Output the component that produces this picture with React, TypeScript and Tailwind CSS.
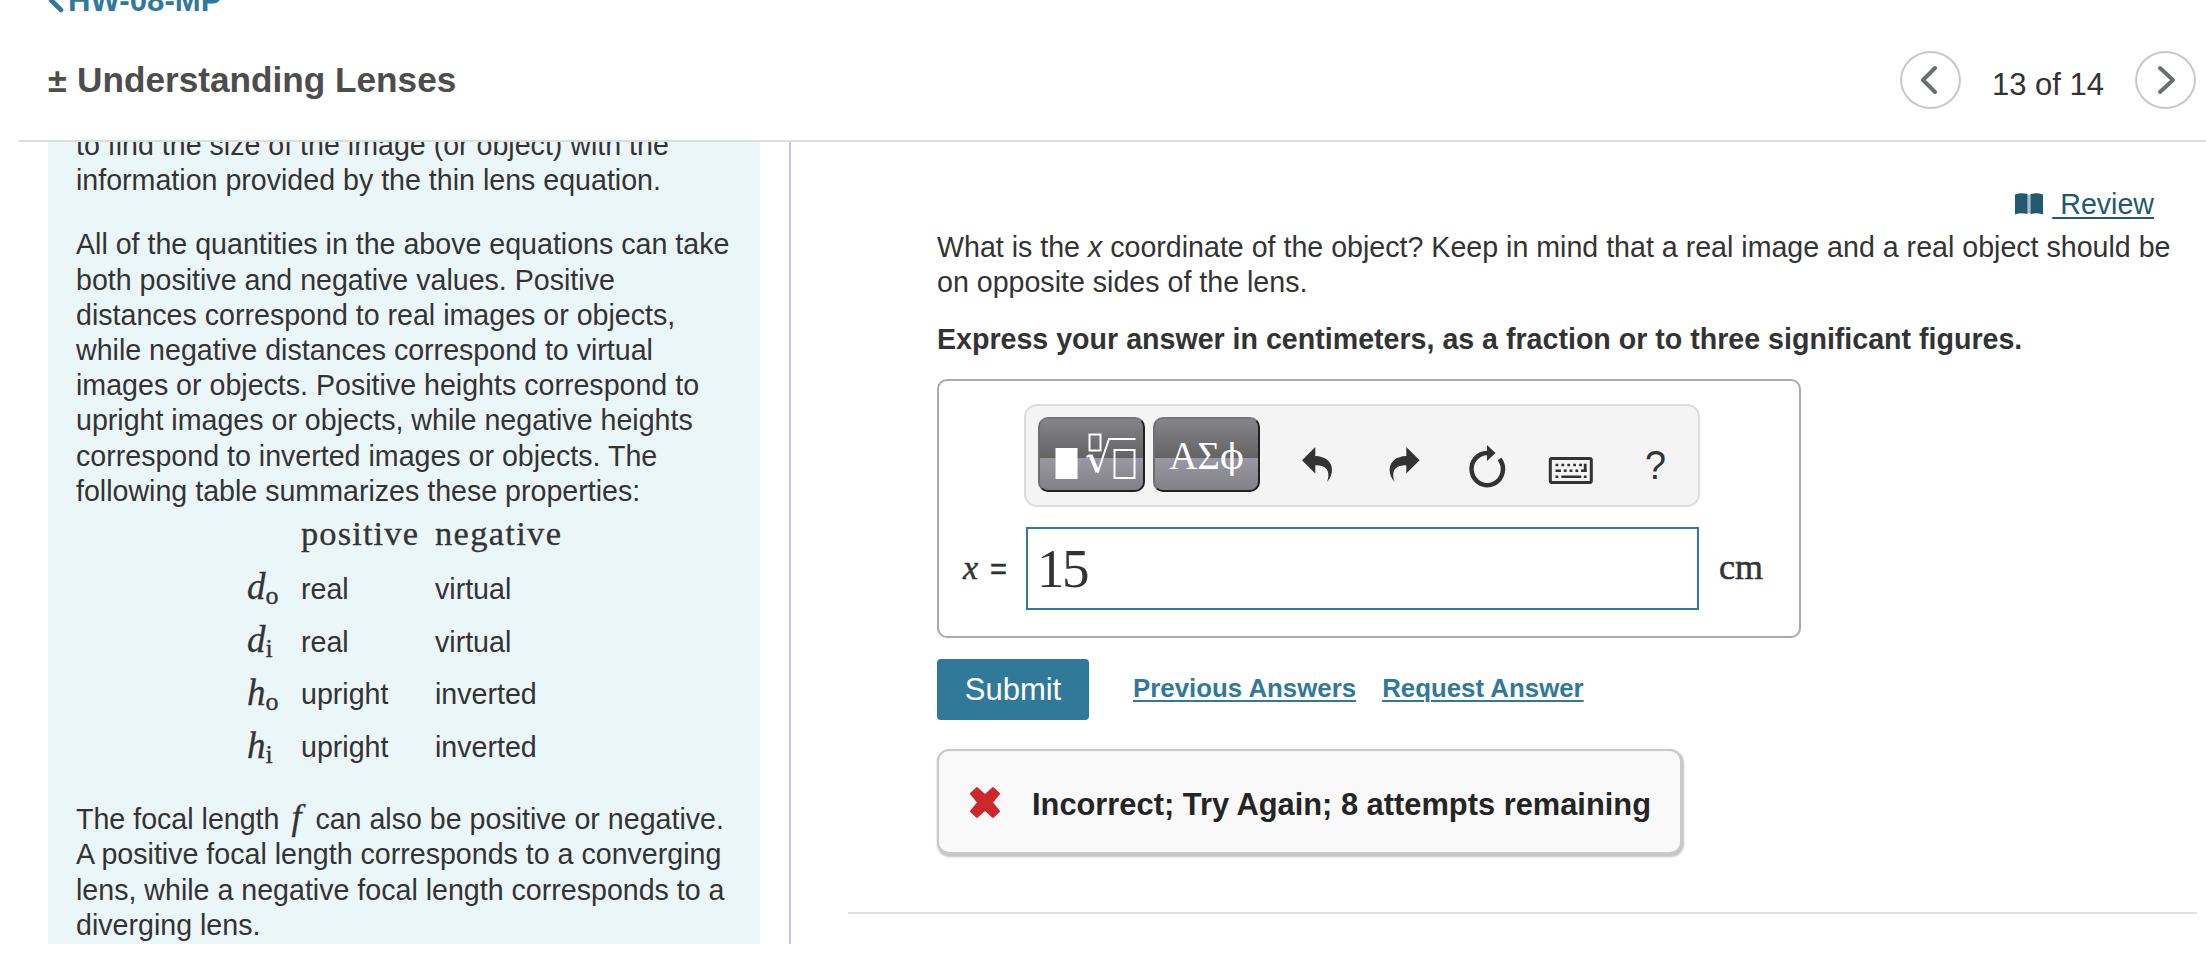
import type { ReactNode } from "react";

const SERIF = "font-['Liberation_Serif',serif]";

const PROPERTIES = [
  { symbol: "d", sub: "o", positive: "real", negative: "virtual" },
  { symbol: "d", sub: "i", positive: "real", negative: "virtual" },
  { symbol: "h", sub: "o", positive: "upright", negative: "inverted" },
  { symbol: "h", sub: "i", positive: "upright", negative: "inverted" },
];

function NavButton({ label, points }: { label: string; points: string }) {
  return (
    <button
      aria-label={label}
      className="w-[61px] h-[58px] rounded-[50%] border-2 border-[#c8c8c8] flex items-center justify-center"
    >
      <svg width="20" height="30" viewBox="0 0 20 30" fill="none" stroke="#6a7070" strokeWidth="4" strokeLinecap="round" strokeLinejoin="round">
        <polyline points={points} />
      </svg>
    </button>
  );
}

function PaletteButton({ children }: { children: ReactNode }) {
  return (
    <button className="w-[107px] h-[75px] rounded-[10px] border-2 border-t-[#77767a] border-l-[#6f6f72] border-r-[#202022] border-b-[#202022] bg-[linear-gradient(to_bottom,#858489_0%,#636363_55%,#9997a2_55%,#828186_100%)] overflow-hidden">
      {children}
    </button>
  );
}

function Header() {
  return (
    <header className="h-[142px] ml-[19px] border-b-2 border-[#ddd] flex justify-between overflow-hidden">
      <div className="ml-[29px]">
        <div className="h-[62px] flex items-start text-[#317999]">
          <svg className="mt-[-12px]" width="18" height="26" viewBox="0 0 18 26" fill="none" stroke="currentColor" strokeWidth="4.6" strokeLinecap="round" strokeLinejoin="round">
            <polyline points="13,2 3,12 13,22" />
          </svg>
          <span className="mt-[-17px] ml-[2px] text-[31.2px] leading-[36px] font-bold">HW-08-MP</span>
        </div>
        <h1 className="text-[35.2px] leading-[36px] font-bold text-[#4d4d4d] whitespace-nowrap">
          <span className="inline-block w-[29px] text-[34px]">±</span>Understanding Lenses
        </h1>
      </div>
      <nav className="flex items-start mt-[51px] mr-[10px]">
        <NavButton label="Previous item" points="14,3 2,15 14,27" />
        <span className="w-[174px] mt-[16px] text-center text-[31px] leading-[36px]">13 of 14</span>
        <NavButton label="Next item" points="4,3 17,15 4,27" />
      </nav>
    </header>
  );
}

function IntroPanel() {
  return (
    <aside className="w-[712px] h-[802px] ml-[48px] pl-[28px] bg-[#eaf6f8] overflow-hidden text-[28.6px] leading-[35.2px] whitespace-nowrap">
      <p className="mt-[-14px]">
        to find the size of the image (or object) with the
        <br />
        information provided by the thin lens equation.
      </p>
      <p className="mt-[29px]">
        All of the quantities in the above equations can take
        <br />
        both positive and negative values. Positive
        <br />
        distances correspond to real images or objects,
        <br />
        while negative distances correspond to virtual
        <br />
        images or objects. Positive heights correspond to
        <br />
        upright images or objects, while negative heights
        <br />
        correspond to inverted images or objects. The
        <br />
        following table summarizes these properties:
      </p>
      <div className="ml-[171px] mt-[4px] grid grid-cols-[54px_134px_200px]">
        <span />
        <span className={`${SERIF} text-[34.5px] tracking-[1.1px] leading-[40px] [-webkit-text-stroke:0.3px]`}>positive</span>
        <span className={`${SERIF} text-[34.5px] tracking-[1.3px] leading-[40px] [-webkit-text-stroke:0.3px]`}>negative</span>
      </div>
      <div className="ml-[171px] mt-[10px]">
        {PROPERTIES.map((row) => (
          <div key={row.symbol + row.sub} className="h-[52.8px] grid grid-cols-[54px_134px_200px] items-center">
            <span className={`${SERIF} text-[37px] leading-[40px] [-webkit-text-stroke:0.3px]`}>
              <i>{row.symbol}</i>
              <span className="relative top-[5px] text-[26px]">{row.sub}</span>
            </span>
            <span>{row.positive}</span>
            <span>{row.negative}</span>
          </div>
        ))}
      </div>
      <p className="mt-[28px]">
        The focal length <i className={`${SERIF} text-[36px] leading-[20px] ml-[4px] mr-[6px] [-webkit-text-stroke:0.3px]`}>f</i> can also be positive or negative.
        <br />
        A positive focal length corresponds to a converging
        <br />
        lens, while a negative focal length corresponds to a
        <br />
        diverging lens.
      </p>
    </aside>
  );
}

function RootGlyph() {
  return (
    <svg width="103" height="71" viewBox="1040.500 419 103 71" fill="none" stroke="#fff" strokeWidth="2">
      <rect x="1056" y="448" width="22" height="31" fill="#fff" stroke="none" />
      <rect x="1090" y="434.500" width="11" height="16" />
      <polyline points="1087,457 1091,455" />
      <polyline points="1091,455 1098,472" strokeWidth="4" />
      <polyline points="1098,473 1109.500,439 1136,439" />
      <rect x="1115" y="450" width="20" height="28" />
    </svg>
  );
}

function Toolbar() {
  return (
    <div className="w-[676px] h-[103px] rounded-[13px] border-2 border-[#dcdcdc] bg-[#f4f4f4] flex items-start pl-3 pt-[11px]">
      <PaletteButton>
        <RootGlyph />
      </PaletteButton>
      <div className="w-2" />
      <PaletteButton>
        <span className={`${SERIF} block text-[39px] leading-[73px] text-white`}>
          ΑΣ<span className="font-['DejaVu_Serif',serif] text-[35px] leading-[20px]">ϕ</span>
        </span>
      </PaletteButton>
      <svg width="420" height="75" viewBox="1260 417 420 75" fill="none">
        <path d="M1302 460.300L1315.300 447v9c10 .4 16.700 5.500 16.700 14 0 4.500-2 8.500-5 12 .6-2 1.400-4 1.400-7 0-6-4-10-13.100-9.700v8.300z" fill="#333" />
        <path d="M1419.600 460.300L1406.300 447v9c-10 .4-16.700 5.500-16.700 14 0 4.500 2 8.500 5 12-.6-2-1.400-4-1.400-7 0-6 4-10 13.100-9.700v8.300z" fill="#333" />
        <path d="M1488 453A15.700 16.100 0 1 0 1499.500 459" stroke="#333" strokeWidth="4.500" />
        <path d="M1487 445l8.500 8-8.500 8z" fill="#333" />
        <rect x="1550.300" y="458.500" width="41" height="24" rx="1.500" stroke="#333" strokeWidth="3" />
        <path
          d="M1555.500 465h2.800m3.100 0h2.800m3.100 0h2.800m3.100 0h2.800m3.100 0h2.800M1555.500 470.700h5.500m2.800 0h2.800m3 0h2.800m3 0h2.800m2.800 0h5.600M1555.500 476.700h2.800m3 0h20m2.500 0h2.800"
          stroke="#333"
          strokeWidth="2.600"
        />
        <path d="M1585.200 463.700v8" stroke="#333" strokeWidth="2.800" />
        <text x="1645" y="479" fill="#333" fontSize="40" textLength="21" lengthAdjust="spacingAndGlyphs" fontFamily="Liberation Sans, sans-serif">?</text>
      </svg>
    </div>
  );
}

function AnswerBox() {
  return (
    <div className="mt-[22px] w-[864px] h-[259px] rounded-[10px] border-2 border-[#aaa] pl-[24px] pt-[23px]">
      <div className="ml-[61px]">
        <Toolbar />
      </div>
      <div className={`${SERIF} mt-5 flex items-center`}>
        <span className="w-[63px] text-[34px] leading-[40px] whitespace-nowrap [-webkit-text-stroke:0.5px]">
          <i>x</i>
          <span className="ml-[12px] text-[29px] font-['Liberation_Sans',sans-serif]">=</span>
        </span>
        <div className="w-[673px] h-[83px] border-2 border-[#317999] pl-[9px] text-[55px] tracking-[-2.5px] leading-[79px]">15</div>
        <span className="ml-[20px] pb-[2px] text-[36px] leading-[40px] [-webkit-text-stroke:0.5px]">cm</span>
      </div>
    </div>
  );
}

function Feedback() {
  return (
    <div className="mt-[29px] w-[745px] h-[105px] rounded-[12px] border-2 border-[#c8c9c9] bg-[#f9f9f9] shadow-[1px_2px_2px_1px_#c4c4c4] flex items-center pl-[31px]">
      <svg className="mt-[3px]" width="30" height="31" viewBox="0 0 30 30" preserveAspectRatio="none" fill="#cc292d" stroke="#cc292d" strokeWidth="2.500" strokeLinejoin="round">
        <path d="M7 1.300L15 8.500 23 1.300 28.700 6.500 21.500 15 28.700 23.500 23 28.700 15 21.500 7 28.700 1.300 23.500 8.500 15 1.300 6.500z" />
      </svg>
      <span className="ml-[32px] mt-[7px] text-[30.83px] leading-[36px] font-bold text-[#252525] whitespace-nowrap">
        Incorrect; Try Again; 8 attempts remaining
      </span>
    </div>
  );
}

function QuestionPanel() {
  return (
    <main className="flex-1 ml-[57px] mr-[9px] h-[772px] border-b-2 border-[#e0e0e0] pl-[89px] text-[28.6px] leading-[35.2px] whitespace-nowrap">
      <div className="mt-[45px] pr-[43px] flex justify-end items-center text-[#21596f] text-[28.6px]">
        <svg className="mr-[9px] mt-[-2px]" width="28" height="22" viewBox="0 0 28 22" fill="currentColor">
          <path d="M0 1.500Q6-.5 12.500 1V21Q6 19.500 0 21.500zM15.500 1Q22-.5 28 1.500V21.500Q22 19.500 15.500 21z" />
          <path d="M12.500 2h3v18h-3z" opacity=".4" />
        </svg>
        <a className="underline decoration-2 underline-offset-[3px] whitespace-pre"> Review</a>
      </div>
      <p className="mt-[8px]">
        What is the <i>x</i> coordinate of the object? Keep in mind that a real image and a real object should be
        <br />
        on opposite sides of the lens.
      </p>
      <p className="mt-[21px] font-bold">
        Express your answer in centimeters, as a fraction or to three significant figures.
      </p>
      <AnswerBox />
      <div className="mt-[21px] flex items-center">
        <button className="w-[152px] h-[61px] rounded-[4px] bg-[#317999] text-white text-[31px]">Submit</button>
        <a className="ml-[44px] mb-px text-[25.85px] font-bold text-[#317999] underline decoration-2 underline-offset-[3px]">Previous Answers</a>
        <a className="ml-[26px] mb-px text-[25.85px] font-bold text-[#317999] underline decoration-2 underline-offset-[3px]">Request Answer</a>
      </div>
      <Feedback />
    </main>
  );
}

export default function App() {
  return (
    <div className="w-[2206px] h-[980px] overflow-hidden bg-white font-['Liberation_Sans',Arial,sans-serif] text-[#333]">
      <Header />
      <div className="flex items-start">
        <IntroPanel />
        <div className="ml-[29px] w-[2px] h-[802px] bg-[#bccadb]" />
        <QuestionPanel />
      </div>
    </div>
  );
}
